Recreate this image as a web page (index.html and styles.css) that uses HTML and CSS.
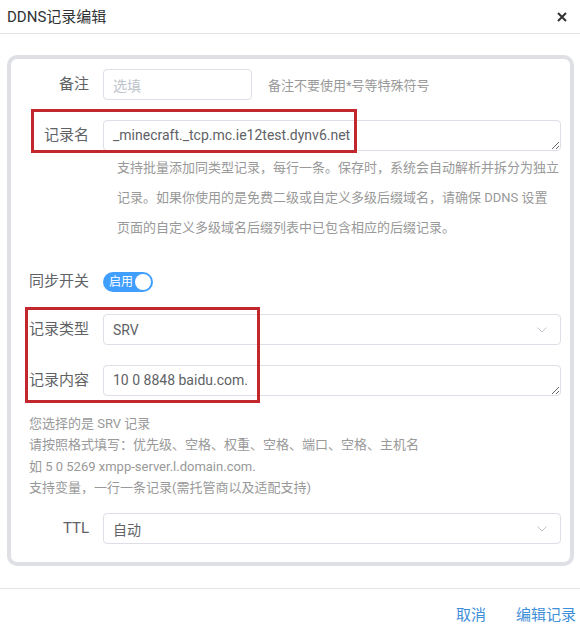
FILE: index.html
```html
<!DOCTYPE html>
<html lang="zh-CN">
<head>
<meta charset="utf-8">
<title>DDNS记录编辑</title>
<link rel="stylesheet" href="styles.css">
</head>
<body>
<div class="dialog">
  <div class="dialog-header">
    <span class="dialog-title">DDNS记录编辑</span>
    <svg class="close-icon" width="10" height="10" viewBox="0 0 10 10"><path d="M1 1L9 9M9 1L1 9" stroke="#303133" stroke-width="2" fill="none"/></svg>
  </div>
  <div class="dialog-body">
    <div class="card">
      <div class="form-row">
        <label class="form-label">备注</label>
        <div class="input short"><span class="placeholder">选填</span></div>
        <span class="inline-hint">备注不要使用*号等特殊符号</span>
      </div>
      <div class="form-row gap-20">
        <label class="form-label">记录名</label>
        <textarea class="textarea" rows="1">_minecraft._tcp.mc.ie12test.dynv6.net</textarea>
      </div>
      <p class="help-wide">支持批量添加同类型记录，每行一条。保存时，系统会自动解析并拆分为独立<br>记录。如果你使用的是免费二级或自定义多级后缀域名，请确保 DDNS 设置<br>页面的自定义多级域名后缀列表中已包含相应的后缀记录。</p>
      <div class="form-row gap-23">
        <label class="form-label">同步开关</label>
        <div class="switch"><span class="switch-text">启用</span><span class="switch-knob"></span></div>
      </div>
      <div class="form-row gap-17">
        <label class="form-label">记录类型</label>
        <div class="select"><span>SRV</span><svg width="10" height="6" viewBox="0 0 10 6"><path d="M0.5 0.5L5 5L9.5 0.5" stroke="#c0c4cc" stroke-width="1" fill="none"/></svg></div>
      </div>
      <div class="form-row gap-20">
        <label class="form-label">记录内容</label>
        <textarea class="textarea" rows="1">10 0 8848 baidu.com.</textarea>
      </div>
      <div class="help-block">
        <div>您选择的是 SRV 记录</div>
        <div>请按照格式填写：优先级、空格、权重、空格、端口、空格、主机名</div>
        <div>如 5 0 5269 xmpp-server.l.domain.com.</div>
        <div>支持变量，一行一条记录(需托管商以及适配支持)</div>
      </div>
      <div class="form-row gap-15">
        <label class="form-label">TTL</label>
        <div class="select"><span>自动</span><svg width="10" height="6" viewBox="0 0 10 6"><path d="M0.5 0.5L5 5L9.5 0.5" stroke="#c0c4cc" stroke-width="1" fill="none"/></svg></div>
      </div>
      <div class="mark mark-name"></div>
      <div class="mark mark-type"></div>
    </div>
  </div>
  <div class="dialog-footer">
    <button class="text-btn">取消</button>
    <button class="text-btn">编辑记录</button>
  </div>
</div>
</body>
</html>
```

FILE: styles.css
```css
* { box-sizing: border-box; }

body {
  margin: 0;
  background: #fff;
  font-family: Roboto, "Noto Sans CJK SC", sans-serif;
  color: #606266;
}

.dialog {
  width: 580px;
}

.dialog-header {
  height: 34px;
  border-bottom: 1px solid #e4e4e4;
  display: flex;
  align-items: center;
  justify-content: space-between;
  padding: 0 13px 0 7px;
}

.dialog-title {
  font-size: 15px;
  line-height: 20px;
  color: #303133;
}

.close-icon {
  display: block;
}

.dialog-body {
  padding: 21px 6px 0 7px;
}

.card {
  position: relative;
  border: 4px solid #dfe0e5;
  border-radius: 10px;
  padding: 10px 9px 18px 0;
}

.form-row {
  display: flex;
  align-items: center;
  height: 31px;
}

.gap-15 { margin-top: 15px; }
.gap-17 { margin-top: 17px; }
.gap-20 { margin-top: 20px; }
.gap-23 { margin-top: 23px; }

.form-label {
  flex: 0 0 92px;
  padding-right: 14px;
  text-align: right;
  font-size: 15px;
  line-height: 31px;
  color: #606266;
}

.input {
  height: 31px;
  border: 1px solid #dcdfe6;
  border-radius: 4px;
  padding: 0 9px;
  display: flex;
  align-items: center;
  font-size: 14px;
}

.input.short {
  width: 149px;
}

.placeholder {
  color: #c0c4cc;
}

.inline-hint {
  margin-left: 16px;
  font-size: 13px;
  color: #999;
}

.textarea {
  flex: 1;
  height: 31px;
  min-height: 31px;
  border: 1px solid #dcdfe6;
  border-radius: 4px;
  padding: 4px 9px;
  font-family: inherit;
  font-size: 14px;
  line-height: 21px;
  color: #606266;
  resize: vertical;
  overflow: hidden;
  outline: none;
  background: #fff;
}

.help-wide {
  margin: 2px 0 0 106px;
  font-size: 13px;
  line-height: 30px;
  color: #999;
  white-space: nowrap;
}

.switch {
  width: 50px;
  height: 20px;
  border-radius: 10px;
  background: #409eff;
  display: flex;
  align-items: center;
  justify-content: space-between;
  padding: 0 2px 0 6px;
}

.switch-text {
  font-size: 12px;
  line-height: 20px;
  color: #fff;
}

.switch-knob {
  width: 16px;
  height: 16px;
  border-radius: 50%;
  background: #fff;
}

.select {
  flex: 1;
  height: 31px;
  border: 1px solid #dcdfe6;
  border-radius: 4px;
  padding: 0 13px 0 9px;
  display: flex;
  align-items: center;
  justify-content: space-between;
  font-size: 14px;
  color: #606266;
}

.select svg {
  display: block;
}

.help-block {
  margin: 17px 0 0 18px;
  font-size: 13px;
  line-height: 21.3px;
  color: #999;
}

.mark {
  position: absolute;
  border: 3px solid #c1272d;
}

.mark-name {
  left: 20px;
  top: 50px;
  width: 326px;
  height: 44px;
}

.mark-type {
  left: 14px;
  top: 248px;
  width: 235px;
  height: 96px;
}

.dialog-footer {
  margin-top: 22px;
  border-top: 1px solid #e4e4e4;
  display: flex;
  justify-content: flex-end;
  gap: 30px;
  padding: 16px 4px 0 0;
}

.text-btn {
  border: none;
  background: none;
  padding: 0;
  font-family: inherit;
  font-size: 15px;
  line-height: 20px;
  color: #3d8ed8;
  cursor: pointer;
}
```
